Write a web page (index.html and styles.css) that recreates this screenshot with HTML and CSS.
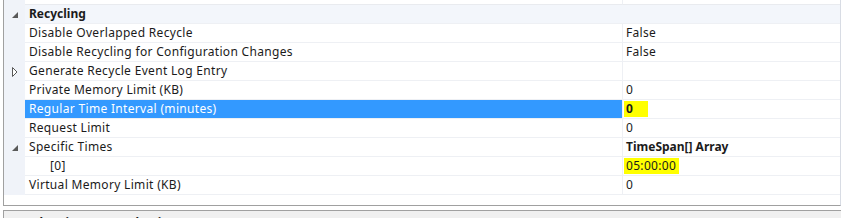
FILE: index.html
```html
<!DOCTYPE html>
<html lang="en">
<head>
<meta charset="UTF-8">
<title>Properties</title>
<link rel="stylesheet" href="styles.css">
</head>
<body>

<div class="grid">
    <div class="row top"><div class="gutter"></div><div class="name"></div><div class="value"></div></div>

    <div class="row category">
        <div class="gutter"><svg class="exp" width="6" height="6" viewBox="0 0 6 6"><polygon points="6,0 6,6 0,6"/></svg></div>
        <div class="name">Recycling</div>
        <div class="value"></div>
    </div>

    <div class="row"><div class="gutter"></div><div class="name">Disable Overlapped Recycle</div><div class="value">False</div></div>
    <div class="row"><div class="gutter"></div><div class="name">Disable Recycling for Configuration Changes</div><div class="value">False</div></div>
    <div class="row">
        <div class="gutter"><svg class="col" width="6" height="10" viewBox="0 0 6 10"><polygon points="0.5,0.5 5,5 0.5,9.5"/></svg></div>
        <div class="name">Generate Recycle Event Log Entry</div>
        <div class="value"></div>
    </div>
    <div class="row"><div class="gutter"></div><div class="name">Private Memory Limit (KB)</div><div class="value">0</div></div>
    <div class="row selected"><div class="gutter"></div><div class="name">Regular Time Interval (minutes)</div><div class="value"><span class="mark bold">0</span></div></div>
    <div class="row"><div class="gutter"></div><div class="name">Request Limit</div><div class="value">0</div></div>
    <div class="row">
        <div class="gutter"><svg class="exp" width="6" height="6" viewBox="0 0 6 6"><polygon points="6,0 6,6 0,6"/></svg></div>
        <div class="name">Specific Times</div>
        <div class="value bold">TimeSpan[] Array</div>
    </div>
    <div class="row"><div class="gutter"></div><div class="name child">[0]</div><div class="value"><span class="mark">05:00:00</span></div></div>
    <div class="row"><div class="gutter"></div><div class="name">Virtual Memory Limit (KB)</div><div class="value">0</div></div>
</div>

<div class="help">
    <div class="help-title">Regular Time Interval (minutes)</div>
</div>

</body>
</html>
```

FILE: styles.css
```css
body {
    margin: 0;
    width: 841px;
    height: 218px;
    overflow: hidden;
    background: #fff;
    font-family: 'Noto Sans', 'Liberation Sans', sans-serif;
    font-size: 12px;
    letter-spacing: 0.32px;
    color: #1b1b1b;
}

/* property grid */
.grid {
    margin-top: -14px;
    margin-left: 3px;
    height: 220px;
    box-sizing: border-box;
    border-left: 1px solid #a0a0a0;
    border-right: 1px solid #d8dce4;
    border-bottom: 1px solid #a0a0a0;
}

.row {
    display: grid;
    grid-template-columns: 21px 598px 1fr;
    height: 19px;
}

.gutter {
    background: #f0f3f9;
    display: flex;
    align-items: center;
    justify-content: center;
}

.name,
.value {
    border-bottom: 1px solid #eef0f4;
    line-height: 18px;
    white-space: nowrap;
    overflow: hidden;
}

.name {
    padding-left: 4px;
    border-right: 1px solid #eef0f4;
}

.value {
    padding-left: 3px;
}

.top .name,
.top .value {
    border-bottom-color: #e9ebef;
}

.category .name,
.category .value {
    background: #f3f6fb;
    border-right: none;
}

.category .name,
.bold,
.help-title {
    font-weight: bold;
    letter-spacing: 0;
}

.child {
    padding-left: 25px;
}

.selected .name {
    background: #3399ff;
    color: #fff;
}

.mark {
    display: inline-block;
    background: #ffff00;
    padding: 0 3px 0 2px;
    margin-left: -2px;
    margin-top: 1px;
    line-height: 16px;
}

.selected .mark {
    min-width: 19px;
}

/* expander glyphs */
.exp polygon {
    fill: #595959;
}

.col polygon {
    fill: #fff;
    stroke: #595959;
    stroke-width: 1;
}

/* description pane */
.help {
    margin-top: 4px;
    margin-left: 3px;
    height: 20px;
    border-top: 1px solid #a0a0a0;
    border-left: 1px solid #a0a0a0;
    background: #f0f0f0;
}

.help-title {
    padding: 3px 0 0 5px;
}
```
